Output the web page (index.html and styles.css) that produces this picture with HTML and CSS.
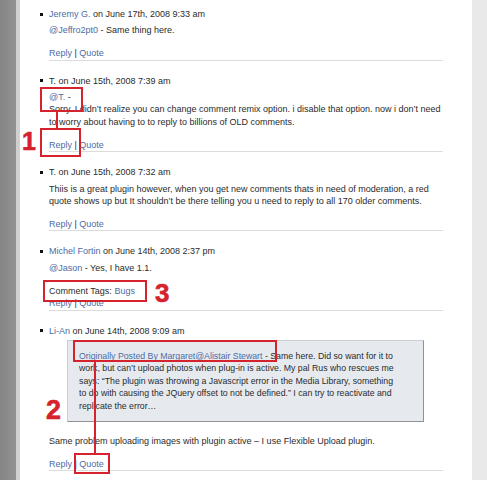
FILE: index.html
```html
<!DOCTYPE html>
<html lang="en">
<head>
<meta charset="utf-8">
<title>Comments</title>
<link rel="stylesheet" href="styles.css">
</head>
<body>
<div class="page">
  <div class="rail-left"></div>
  <main class="content">
    <ul class="comments">
      <li class="comment">
        <div class="meta"><span class="bullet"></span><span><a href="#">Jeremy G.</a> on June 17th, 2008 9:33 am</span></div>
        <p class="text"><a href="#">@Jeffro2pt0</a> - Same thing here.</p>
        <div class="actions"><a href="#">Reply</a> | <a href="#">Quote</a></div>
      </li>
      <li class="comment">
        <div class="meta"><span class="bullet"></span><span>T. on June 15th, 2008 7:39 am</span></div>
        <p class="text"><a href="#">@T.</a> -<br>Sorry. I didn’t realize you can change comment remix option. i disable that option. now i don’t need<br>to worry about having to to reply to billions of OLD comments.</p>
        <div class="actions"><a href="#">Reply</a> | <a href="#">Quote</a></div>
      </li>
      <li class="comment">
        <div class="meta"><span class="bullet"></span><span>T. on June 15th, 2008 7:32 am</span></div>
        <p class="text">Thiis is a great plugin however, when you get new comments thats in need of moderation, a red<br>quote shows up but It shouldn’t be there telling you u need to reply to all 170 older comments.</p>
        <div class="actions"><a href="#">Reply</a> | <a href="#">Quote</a></div>
      </li>
      <li class="comment">
        <div class="meta"><span class="bullet"></span><span><a href="#">Michel Fortin</a> on June 14th, 2008 2:37 pm</span></div>
        <p class="text"><a href="#">@Jason</a> - Yes, I have 1.1.</p>
        <div class="tags">Comment Tags: <a href="#">Bugs</a></div>
        <div class="actions"><a href="#">Reply</a> | <a href="#">Quote</a></div>
      </li>
      <li class="comment">
        <div class="meta"><span class="bullet"></span><span><a href="#">Li-An</a> on June 14th, 2008 9:09 am</span></div>
        <blockquote class="quote"><a href="#">Originally Posted By Margaret@Alistair Stewart</a> - Same here. Did so want for it to<br>work, but can’t upload photos when plug-in is active. My pal Rus who rescues me<br>says: “The plugin was throwing a Javascript error in the Media Library, something<br>to do with causing the JQuery offset to not be defined.” I can try to reactivate and<br>replicate the error…</blockquote>
        <p class="text after-quote">Same problem uploading images with plugin active – I use Flexible Upload plugin.</p>
        <div class="actions"><a href="#">Reply</a> | <a href="#">Quote</a></div>
      </li>
    </ul>
  </main>
  <div class="rail-right"></div>

  <div class="mark box-a1"></div>
  <div class="mark line-a"></div>
  <div class="mark box-a2"></div>
  <div class="num num-1">1</div>

  <div class="mark box-c"></div>
  <div class="num num-3">3</div>

  <div class="mark box-b1"></div>
  <div class="mark line-b"></div>
  <div class="mark box-b2"></div>
  <div class="num num-2">2</div>
</div>
</body>
</html>
```

FILE: styles.css
```css
html, body {
  margin: 0;
  padding: 0;
  background: #fff;
}

.page {
  position: relative;
  display: flex;
  width: 487px;
  height: 480px;
  overflow: hidden;
  font-family: "Liberation Sans", Arial, sans-serif;
  font-size: 9px;
  line-height: 12.4px;
  color: #2b2b2b;
}

.rail-left {
  width: 16px;
  flex: none;
  background: linear-gradient(to right, #858585, #929292);
  border-right: 4px solid #d0d0d0;
}

.content {
  flex: 1;
  background: #fff;
}

.rail-right {
  width: 15px;
  flex: none;
  background: #e9e9e9;
}

a {
  color: #4c6ca6;
  text-decoration: none;
}

.comments {
  list-style: none;
  margin: 0 0 0 28px;
  padding: 7.8px 0 0 0;
  width: 395px;
}

.comment {
  padding-left: 1px;
  margin-bottom: 14px;
}

.meta {
  display: flex;
  align-items: center;
  gap: 6.5px;
  margin-left: -9.5px;
  white-space: nowrap;
}

.bullet {
  width: 3px;
  height: 3px;
  background: #111;
  flex: none;
}

.text {
  margin: 4px 0 10.6px 0;
  white-space: nowrap;
}

.tags {
  white-space: nowrap;
}

.actions {
  border-bottom: 1px solid #dcdcdc;
  white-space: nowrap;
}

.quote {
  margin: 3px 0 0 18px;
  width: 333px;
  padding: 8.5px 11px 9.3px 11px;
  font-size: 8.75px;
  line-height: 12.5px;
  background: #e6eaef;
  border: 1px solid #c9ced4;
  border-right-color: #8e9196;
  border-bottom-color: #8e9196;
  white-space: nowrap;
}

.text.after-quote {
  margin-top: 12.5px;
}

/* red annotations drawn over the screenshot */
.mark {
  position: absolute;
  box-sizing: border-box;
  border: 2px solid #d5222c;
}

.box-a1 { left: 40px; top: 87px; width: 43px; height: 25px; }
.line-a { left: 56px; top: 111px; width: 2px; height: 18px; border: none; background: #d5222c; }
.box-a2 { left: 40px; top: 128px; width: 41px; height: 29px; }

.box-c { left: 43px; top: 280px; width: 104px; height: 22px; }

.box-b1 { left: 73px; top: 340px; width: 204px; height: 22px; }
.line-b { left: 94px; top: 361px; width: 2px; height: 93px; border: none; background: #d5222c; }
.box-b2 { left: 74px; top: 453px; width: 36px; height: 21px; }

.num {
  position: absolute;
  font-family: "Liberation Sans", Arial, sans-serif;
  font-weight: bold;
  color: #d5222c;
  line-height: 1;
  -webkit-text-stroke: 0.6px #d5222c;
}

.num-1 { left: 22px; top: 129px; font-size: 25px; }
.num-3 { left: 155px; top: 280px; font-size: 26px; }
.num-2 { left: 46px; top: 397px; font-size: 27px; }
```
